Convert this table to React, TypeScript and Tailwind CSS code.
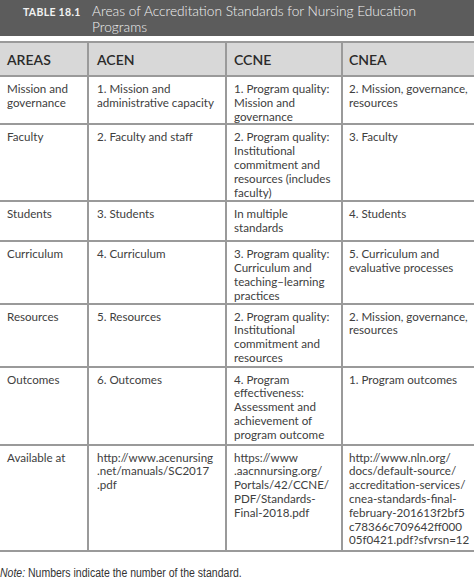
type Row = { area: string[]; acen: string[]; ccne: string[]; cnea: string[]; h: string };

const rows: Row[] = [
  {
    area: ['Mission and', 'governance'],
    acen: ['1. Mission and', 'administrative capacity'],
    ccne: ['1. Program quality:', 'Mission and', 'governance'],
    cnea: ['2. Mission, governance,', 'resources'],
    h: 'h-[48px]',
  },
  {
    area: ['Faculty'],
    acen: ['2. Faculty and staff'],
    ccne: ['2. Program quality:', 'Institutional', 'commitment and', 'resources (includes', 'faculty)'],
    cnea: ['3. Faculty'],
    h: 'h-[77px]',
  },
  {
    area: ['Students'],
    acen: ['3. Students'],
    ccne: ['In multiple', 'standards'],
    cnea: ['4. Students'],
    h: 'h-[40px]',
  },
  {
    area: ['Curriculum'],
    acen: ['4. Curriculum'],
    ccne: ['3. Program quality:', 'Curriculum and', 'teaching\u2013learning', 'practices'],
    cnea: ['5. Curriculum and', 'evaluative processes'],
    h: 'h-[61px]',
  },
  {
    area: ['Resources'],
    acen: ['5. Resources'],
    ccne: ['2. Program quality:', 'Institutional', 'commitment and', 'resources'],
    cnea: ['2. Mission, governance,', 'resources'],
    h: 'h-[63px]',
  },
  {
    area: ['Outcomes'],
    acen: ['6. Outcomes'],
    ccne: ['4. Program', 'effectiveness:', 'Assessment and', 'achievement of', 'program outcome'],
    cnea: ['1. Program outcomes'],
    h: 'h-[78px]',
  },
  {
    area: ['Available at'],
    acen: ['http://www.acenursing', '.net/manuals/SC2017', '.pdf'],
    ccne: ['https://www', '.aacnnursing.org/', 'Portals/42/CCNE/', 'PDF/Standards-', 'Final-2018.pdf'],
    cnea: [
      'http://www.nln.org/',
      'docs/default-source/',
      'accreditation-services/',
      'cnea-standards-final-',
      'february-201613f2bf5',
      'c78366c709642ff000',
      '05f0421.pdf?sfvrsn=12',
    ],
    h: 'h-[106px]',
  },
];

function Lines({ items }: { items: string[] }) {
  return (
    <>
      {items.map((t) => (
        <span key={t} className="block whitespace-nowrap">
          {t}
        </span>
      ))}
    </>
  );
}

export default function App() {
  const cell = 'align-top pt-[5px] pb-0 text-[11.6px] leading-[13.8px] border-[#9a9a9a]';
  const head = 'text-left align-middle text-[14px] font-semibold text-[#2a2a2a] border-[#9a9a9a]';

  return (
    <div className="w-[474px] h-[577px] overflow-hidden bg-white font-['Lato',sans-serif] text-[#404040]">
      <div className="h-[36px] bg-[#5c5c5c] flex items-start pt-[3px] text-[#f2f2f2]">
        <div className="w-[92px] shrink-0 pl-[23px] pt-[2px] text-[10.5px] font-bold tracking-[0.3px] leading-[14px]">
          TABLE 18.1
        </div>
        <div className="text-[13.7px] font-light leading-[15.5px]">
          <div>Areas of Accreditation Standards for Nursing Education</div>
          <div>Programs</div>
        </div>
      </div>

      <table className="mt-[5px] w-[474px] table-fixed border-collapse">
        <colgroup>
          <col className="w-[88px]" />
          <col className="w-[138px]" />
          <col className="w-[116px]" />
          <col className="w-[132px]" />
        </colgroup>
        <thead>
          <tr className="h-[34px] bg-[#d8d8d8] border-y-2 border-[#9a9a9a]">
            <th className={`${head} pl-[7px]`}>AREAS</th>
            <th className={`${head} pl-[8px] border-l-2`}>ACEN</th>
            <th className={`${head} pl-[7px] border-l-2`}>CCNE</th>
            <th className={`${head} pl-[6px] border-l-2`}>CNEA</th>
          </tr>
        </thead>
        <tbody>
          {rows.map((r) => (
            <tr key={r.area[0]} className={`${r.h} border-b-2 border-[#9a9a9a]`}>
              <td className={`${cell} pl-[7px]`}>
                <Lines items={r.area} />
              </td>
              <td className={`${cell} pl-[8px] border-l-2`}>
                <Lines items={r.acen} />
              </td>
              <td className={`${cell} pl-[7px] border-l-2`}>
                <Lines items={r.ccne} />
              </td>
              <td className={`${cell} pl-[6px] border-l-2`}>
                <Lines items={r.cnea} />
              </td>
            </tr>
          ))}
        </tbody>
      </table>

      <p className="mt-[14px] origin-left scale-x-[0.84] whitespace-nowrap font-['Liberation_Sans',sans-serif] text-[12.5px] leading-[14px] text-[#333]">
        <i>Note:</i> Numbers indicate the number of the standard.
      </p>
    </div>
  );
}
